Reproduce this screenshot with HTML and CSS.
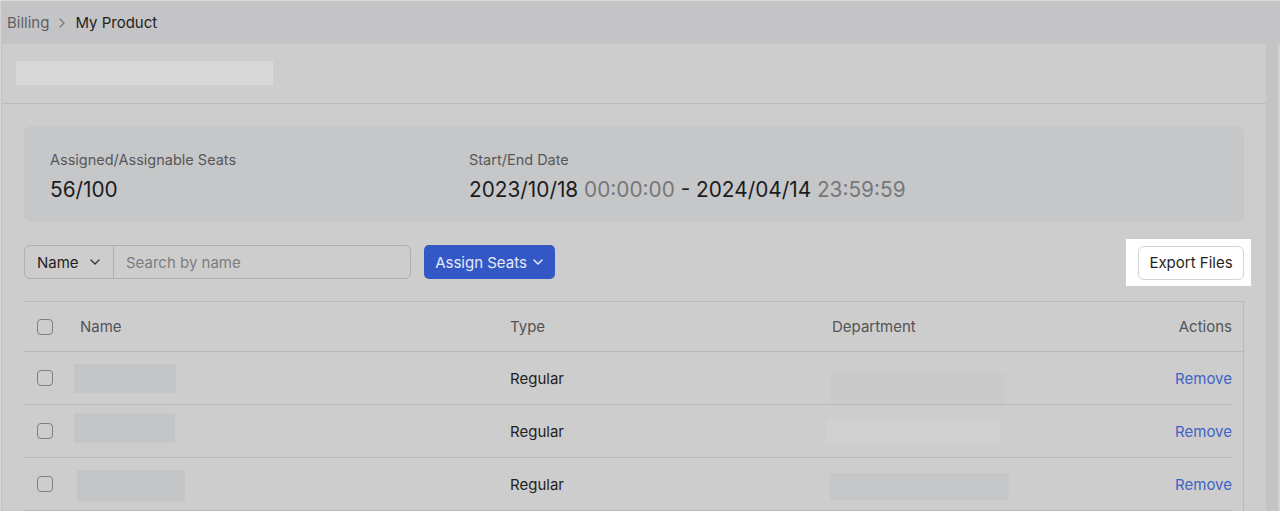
FILE: index.html
```html
<!DOCTYPE html>
<html>
<head>
    <meta charset="UTF-8">
    <title>Billing - My Product</title>
    <link rel="stylesheet" href="styles.css">
</head>
<body>

<div class="frame">
    <!-- Breadcrumb -->
    <div class="crumbs">
        <span class="crumb-link">Billing</span>
        <svg class="crumb-sep" width="8" height="12" viewBox="0 0 8 12"><path d="M2 2 L6 6 L2 10" fill="none" stroke="#7a7a7c" stroke-width="1.3" stroke-linecap="round" stroke-linejoin="round"/></svg>
        <span class="crumb-current">My Product</span>
    </div>

    <div class="layout">
        <main class="panel">
            <div class="panel-head">
                <div class="title-placeholder"></div>
            </div>

            <div class="panel-body">
                <!-- Summary card -->
                <section class="summary">
                    <div class="stat">
                        <div class="stat-label">Assigned/Assignable Seats</div>
                        <div class="stat-value">56/100</div>
                    </div>
                    <div class="stat">
                        <div class="stat-label">Start/End Date</div>
                        <div class="stat-value">2023/10/18 <span class="muted">00:00:00</span> - 2024/04/14 <span class="muted">23:59:59</span></div>
                    </div>
                </section>

                <!-- Toolbar -->
                <div class="toolbar">
                    <div class="search">
                        <div class="search-field">
                            Name
                            <svg width="12" height="8" viewBox="0 0 12 8"><path d="M2 2 L6 6 L10 2" fill="none" stroke="#3a3a3c" stroke-width="1.4" stroke-linecap="round" stroke-linejoin="round"/></svg>
                        </div>
                        <div class="search-input">Search by name</div>
                    </div>
                    <button class="btn-primary">
                        Assign Seats
                        <svg width="12" height="8" viewBox="0 0 12 8"><path d="M2 2 L6 6 L10 2" fill="none" stroke="#e6eaf6" stroke-width="1.5" stroke-linecap="round" stroke-linejoin="round"/></svg>
                    </button>
                    <div class="spotlight">
                        <button class="btn-plain">Export Files</button>
                    </div>
                </div>

                <!-- Seats table -->
                <div class="table">
                    <div class="row head">
                        <div class="cell"><span class="check"></span></div>
                        <div class="cell">Name</div>
                        <div class="cell">Type</div>
                        <div class="cell">Department</div>
                        <div class="cell right">Actions</div>
                    </div>
                    <div class="row">
                        <div class="cell"><span class="check"></span></div>
                        <div class="cell"><span class="ph name-ph w1"></span></div>
                        <div class="cell">Regular</div>
                        <div class="cell"><span class="ph dept-ph d1"></span></div>
                        <div class="cell right"><span class="link">Remove</span></div>
                    </div>
                    <div class="row">
                        <div class="cell"><span class="check"></span></div>
                        <div class="cell"><span class="ph name-ph w2"></span></div>
                        <div class="cell">Regular</div>
                        <div class="cell"><span class="ph dept-ph d2"></span></div>
                        <div class="cell right"><span class="link">Remove</span></div>
                    </div>
                    <div class="row">
                        <div class="cell"><span class="check"></span></div>
                        <div class="cell"><span class="ph name-ph w3"></span></div>
                        <div class="cell">Regular</div>
                        <div class="cell"><span class="ph dept-ph d3"></span></div>
                        <div class="cell right"><span class="link">Remove</span></div>
                    </div>
                </div>
            </div>
        </main>
        <div class="gutter"></div>
    </div>
</div>

</body>
</html>
```

FILE: styles.css
```css
body {
    margin: 0;
    background: #c4c4c6;
    font-family: Inter, "Noto Sans", "Liberation Sans", sans-serif;
    color: #1f1f21;
    overflow: hidden;
}
.frame {
    height: 511px;
    border-top: 1px solid #dcdcdd;
    border-left: 1px solid #d6d6d7;
    box-sizing: border-box;
}
.crumbs {
    height: 43px;
    display: flex;
    align-items: center;
    gap: 8px;
    padding-left: 6px;
    font-size: 15px;
}
.crumb-link {
    color: #5f5f62;
}
.crumb-sep {
    margin: 0 1px;
}
.crumb-current {
    color: #1f1f21;
}
.layout {
    display: flex;
    height: 467px;
}
.panel {
    width: 1264px;
    margin-left: 1px;
    background: #cdcdcd;
    overflow: hidden;
}
.gutter {
    width: 12px;
    background: #c4c4c6;
    border-right: 2px solid #d2d2d3;
}
.panel-head {
    height: 60px;
    border-bottom: 1px solid #bcbcbd;
    box-sizing: border-box;
    padding: 17px 0 0 14px;
}
.title-placeholder {
    width: 257px;
    height: 24px;
    background: #d8d8d8;
}
.panel-body {
    padding: 22px 22px 0 22px;
}
.summary {
    height: 96px;
    box-sizing: border-box;
    background: #c6c7c9;
    border-radius: 8px;
    padding: 25px 26px 0 26px;
    display: grid;
    grid-template-columns: 419px 1fr;
}
.stat-label {
    font-size: 14.5px;
    color: #57575a;
    line-height: 18px;
}
.stat-value {
    margin-top: 9px;
    font-size: 20.8px;
    line-height: 24px;
    color: #1c1c1e;
}
.muted {
    color: #77777a;
}
.toolbar {
    margin-top: 23px;
    display: flex;
    align-items: center;
    height: 34px;
}
.search {
    display: flex;
    height: 34px;
    border: 1px solid #afafb1;
    border-radius: 6px;
    box-sizing: border-box;
    font-size: 15px;
}
.search-field {
    width: 89px;
    box-sizing: border-box;
    display: flex;
    align-items: center;
    gap: 10px;
    padding-left: 12px;
    border-right: 1px solid #afafb1;
    color: #1f1f21;
}
.search-input {
    width: 296px;
    display: flex;
    align-items: center;
    padding-left: 12px;
    box-sizing: border-box;
    color: #7d7d80;
}
.btn-primary {
    margin-left: 13px;
    height: 34px;
    width: 131px;
    border: none;
    border-radius: 5px;
    background: #3358c6;
    color: #e6eaf6;
    font-family: inherit;
    font-size: 15px;
    display: flex;
    align-items: center;
    justify-content: center;
    gap: 5px;
    padding: 0;
}
.spotlight {
    margin-left: auto;
    margin-right: -7px;
    background: #ffffff;
    padding: 7px 7px 6px 12px;
}
.btn-plain {
    display: block;
    width: 106px;
    height: 34px;
    background: #ffffff;
    border: 1px solid #d4d4d6;
    border-radius: 6px;
    font-family: inherit;
    font-size: 15px;
    color: #1f1f21;
    padding: 0;
}
.table {
    margin-top: 22px;
    border-top: 1px solid #b9b9bb;
    border-right: 1px solid #b9b9bb;
    width: 1220px;
    box-sizing: border-box;
}
.row {
    display: grid;
    grid-template-columns: 56px 430px 322px 1fr 120px;
    height: 53px;
    border-bottom: 1px solid #b9b9bb;
    box-sizing: border-box;
    margin-right: 11px;
    font-size: 15px;
}
.row.head {
    height: 50px;
    color: #545457;
    margin-right: 0;
    padding-right: 11px;
}
.cell {
    display: flex;
    align-items: center;
}
.cell.right {
    justify-content: flex-end;
}
.check {
    width: 16px;
    height: 16px;
    box-sizing: border-box;
    border: 1.5px solid #7f7f82;
    border-radius: 4px;
    margin-left: 13px;
}
.ph {
    display: block;
    background: #c4c5c7;
}
.name-ph.w1 { width: 102px; height: 29px; margin-left: -6px; }
.name-ph.w2 { width: 101px; height: 30px; margin-left: -6px; margin-top: -6px; }
.name-ph.w3 { width: 108px; height: 31px; margin-left: -3px; margin-top: 2px; }
.dept-ph.d1 { width: 175px; height: 31px; margin-left: -2px; margin-top: 20px; background: #cacacb; }
.dept-ph.d2 { width: 174px; height: 26px; margin-left: -6px; margin-top: -1px; background: #d0d0d0; }
.dept-ph.d3 { width: 179px; height: 27px; margin-left: -2px; margin-top: 4px; background: #c6c7c9; }
.link {
    color: #4063c6;
}
```
